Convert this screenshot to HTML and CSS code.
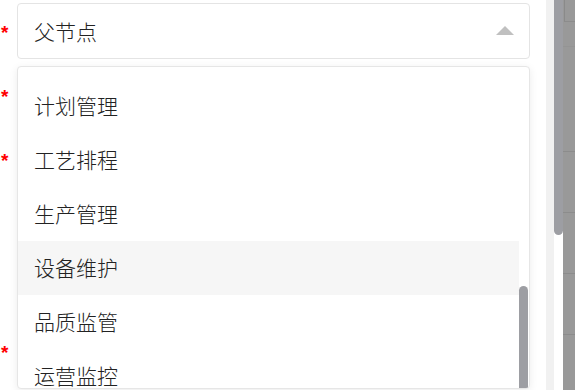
FILE: index.html
```html
<!DOCTYPE html>
<html lang="zh-CN">
<head>
<meta charset="utf-8">
<title>父节点</title>
<link rel="stylesheet" href="styles.css">
</head>
<body>
<div class="page">
  <div class="panel">
    <div class="form">
      <div class="row"><span class="req">*</span><div class="select is-open"><span class="value">父节点</span><span class="caret"></span></div></div>
      <div class="row"><span class="req">*</span><div class="input"></div></div>
      <div class="row"><span class="req">*</span><div class="input"></div></div>
      <div class="row"><span class="req"></span><div class="input"></div></div>
      <div class="row"><span class="req"></span><div class="input"></div></div>
      <div class="row"><span class="req">*</span><div class="input"></div></div>
    </div>
    <div class="dropdown">
      <ul class="options">
        <li class="option">计划管理</li>
        <li class="option">工艺排程</li>
        <li class="option">生产管理</li>
        <li class="option is-hover">设备维护</li>
        <li class="option">品质监管</li>
        <li class="option">运营监控</li>
      </ul>
      <div class="dd-track"><div class="dd-thumb"></div></div>
    </div>
  </div>
  <div class="gutter"></div>
  <div class="page-track"><div class="page-thumb"></div></div>
  <div class="backdrop">
    <div class="bd-cell bd-a"></div>
    <div class="bd-cell bd-b"></div>
    <div class="bd-cell bd-c"></div>
    <div class="bd-cell bd-d"></div>
    <div class="bd-cell bd-d"></div>
    <div class="bd-cell bd-d"></div>
  </div>
</div>
</body>
</html>
```

FILE: styles.css
```css
* { box-sizing: border-box; }
html, body { margin: 0; padding: 0; }
body {
  width: 575px;
  height: 390px;
  overflow: hidden;
  background: #fff;
  font-family: "Noto Sans CJK SC", "Noto Sans", sans-serif;
  color: #303133;
}
.page {
  display: flex;
  height: 390px;
}
.panel {
  position: relative;
  width: 546px;
  background: #fff;
}
.form {
  display: flex;
  flex-direction: column;
  gap: 8px;
  padding-top: 3px;
}
.row {
  display: flex;
  align-items: center;
  height: 56px;
}
.req {
  width: 17px;
  padding-left: 1px;
  color: #f00;
  font-family: "Liberation Sans", sans-serif;
  font-weight: bold;
  font-size: 19px;
  line-height: 1;
  align-self: center;
  margin-top: 2px;
}
.select, .input {
  width: 513px;
  height: 56px;
  border: 1px solid #e4e4e4;
  border-radius: 4px;
  background: #fff;
}
.select {
  display: flex;
  align-items: center;
  justify-content: space-between;
  padding: 0 15px 0 16px;
}
.value {
  font-size: 21px;
  font-weight: 300;
  color: #222;
  margin-top: -1px;
}
.caret {
  width: 0;
  height: 0;
  border-left: 9px solid transparent;
  border-right: 9px solid transparent;
  border-bottom: 9px solid #c0c0c0;
  margin-top: -1px;
}
.dropdown {
  position: absolute;
  top: 66px;
  left: 17px;
  width: 513px;
  height: 323px;
  display: flex;
  border: 1px solid #e6e6e6;
  border-radius: 4px;
  background: #fff;
  box-shadow: 0 2px 8px rgba(0, 0, 0, 0.08);
  overflow: hidden;
}
.options {
  flex: 1;
  list-style: none;
  margin: 0;
  padding: 12px 0 0;
}
.option {
  height: 54px;
  line-height: 52px;
  padding-bottom: 2px;
  padding-left: 16px;
  font-size: 21px;
  font-weight: 300;
  color: #222;
  white-space: nowrap;
}
.option.is-hover { background: #f6f6f6; }
.dd-track {
  width: 10px;
  padding-top: 219px;
  padding-right: 1px;
}
.dd-thumb {
  height: 120px;
  background: #9d9ea3;
  border-radius: 5px 5px 0 0;
}
.gutter {
  width: 8px;
  background: #f1f1f1;
}
.page-track {
  width: 9px;
  background: #fff;
}
.page-thumb {
  height: 235px;
  background: #9d9ea3;
  border-radius: 0 0 5px 5px;
}
.backdrop {
  flex: 1;
  display: flex;
  flex-direction: column;
  background: #999;
}
.bd-cell { border-bottom: 1px solid #8c8c8c; }
.bd-a { height: 22px; border-left: 1px solid #8a8a8a; margin-left: 1px; }
.bd-b { height: 25px; border-bottom-color: #949494; }
.bd-c { height: 105px; }
.bd-d { height: 61px; }
```
